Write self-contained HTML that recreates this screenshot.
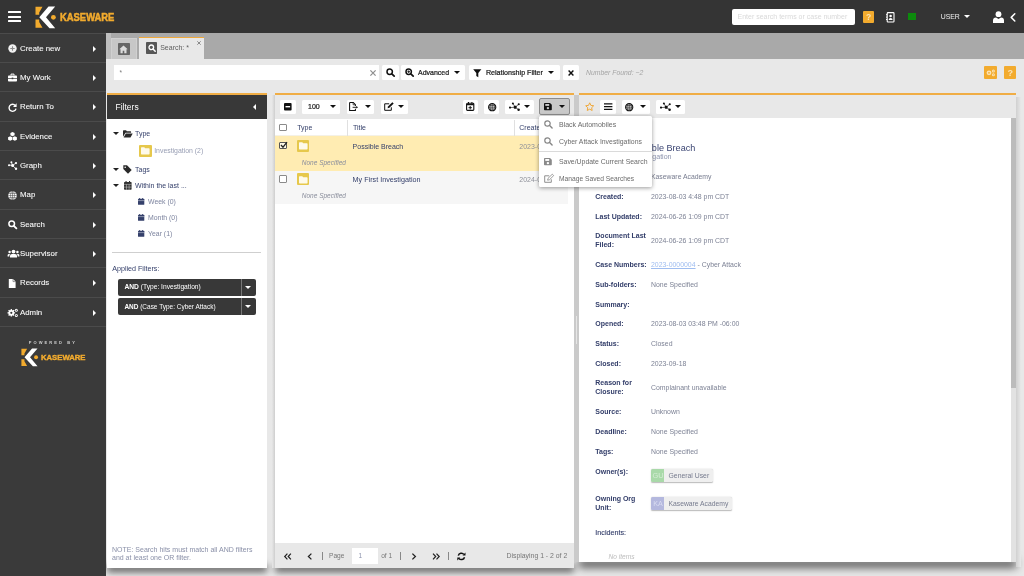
<!DOCTYPE html>
<html lang="en">
<head>
<meta charset="utf-8">
<title>Kaseware - Search</title>
<style>
*{box-sizing:border-box;margin:0;padding:0}
html,body{width:1024px;height:576px;overflow:hidden}
body{position:relative;background:#e8e8e8;font-family:"Liberation Sans",sans-serif;font-size:7px;color:#35406b;line-height:1}
.a{position:absolute}
.t{position:absolute;white-space:nowrap;line-height:10px;height:10px;margin-top:-5px}
svg{position:absolute;overflow:visible}
/* top bar */
#top{left:0;top:0;width:1024px;height:33px;background:#343434}
#side{left:0;top:33px;width:106px;height:543px;background:#3a3a3a}
.sep{position:absolute;left:0;width:106px;height:1px;background:#4b4b4b}
.mi{position:absolute;left:20px;color:#fafafa;font-size:7.85px;-webkit-text-stroke:.08px #fafafa;white-space:nowrap;line-height:10px;height:10px;margin-top:-5px}
.arr{position:absolute;left:92.6px;width:0;height:0;border-left:3.4px solid #fff;border-top:3px solid transparent;border-bottom:3px solid transparent;margin-top:-3px}
#tabs{left:106px;top:33px;width:918px;height:25.5px;background:#a9a9a9}
.btn{position:absolute;background:#fff;border-radius:1.5px;top:65px;height:15px}
.tb{position:absolute;background:#fff;border-radius:1.5px;top:99.5px;height:14.6px}
.car{position:absolute;width:0;height:0;border-top:3.3px solid #111;border-left:3px solid transparent;border-right:3px solid transparent;margin-left:-.4px;margin-top:-.35px}
.panel{position:absolute;background:#fff}
.panel::after{content:"";position:absolute;left:1px;right:1px;bottom:0;height:5px;box-shadow:0 3px 7px 1px rgba(0,0,0,.62);z-index:-1}
.or{position:absolute;height:1.8px;background:#f0ad45}
.lb{position:absolute;left:595.3px;font-weight:bold;font-size:7px;color:#323d69;white-space:nowrap;line-height:9px;margin-top:-4.5px}
.vl{position:absolute;left:651px;font-size:6.92px;padding-top:.6px;color:#7d8295;white-space:nowrap;line-height:10px;height:10px;margin-top:-5px}
#dp::after{box-shadow:0 4px 8px 1.5px rgba(0,0,0,.66)}
</style>
</head>
<body>
<div id="w" style="position:absolute;left:0;top:0;width:1024px;height:576px;will-change:transform">
<!-- TOP BAR -->
<div class="a" id="top">
  <div class="a" style="left:7.8px;top:11px;width:13.5px;height:2.3px;background:#fff;border-radius:.5px"></div>
  <div class="a" style="left:7.8px;top:15.5px;width:13.5px;height:2.3px;background:#fff;border-radius:.5px"></div>
  <div class="a" style="left:7.8px;top:20px;width:13.5px;height:2.3px;background:#fff;border-radius:.5px"></div>
  <svg style="left:35px;top:6px" width="22" height="23" viewBox="0 0 22 23">
    <polygon points="0.5,0.8 7.5,0.8 4.2,6.5 4.2,8.8 0.5,8.8" fill="#f2ab2e"/>
    <polygon points="0.5,13.5 4.2,13.5 4.2,16 7.5,21.8 0.5,21.8" fill="#f2ab2e"/>
    <polygon points="13.5,0.5 20.2,0.5 11,11.2 20.2,22.2 14.5,22.2 4.3,11.2" fill="#fff"/>
    <circle cx="18.4" cy="11.3" r="2.4" fill="#f2ab2e"/>
  </svg>
  <svg style="left:60px;top:11px" width="56" height="13"><text x="0" y="10.4" font-family="Liberation Sans, sans-serif" font-weight="bold" font-size="10.2" fill="#f2ab2e" stroke="#f2ab2e" stroke-width=".5" textLength="54.4" lengthAdjust="spacingAndGlyphs">KASEWARE</text></svg>
  <!-- search input -->
  <div class="a" style="left:732px;top:8.5px;width:123px;height:16px;background:#fff;border-radius:2px"></div>
  <div class="t" style="left:737.5px;top:16.6px;font-size:7px;color:#d9d9d9">Enter search terms or case number</div>
  <!-- orange help -->
  <div class="a" style="left:862.5px;top:10.8px;width:11.8px;height:11.8px;background:#f2ab2e;border-radius:1px"></div>
  <div class="t" style="left:866px;top:16.9px;font-size:8.5px;font-weight:bold;color:#fbe3b5">?</div>
  <!-- address book -->
  <svg style="left:885.5px;top:11.5px" width="9" height="11" viewBox="0 0 9 11">
    <rect x="1.2" y=".6" width="6.8" height="9.4" rx=".8" fill="none" stroke="#fff" stroke-width="1.1"/>
    <circle cx="4.6" cy="4" r="1.3" fill="#fff"/>
    <path d="M2.6 8 a2 1.9 0 0 1 4 0z" fill="#fff"/>
    <rect x="0" y="2.2" width="1.2" height="1" fill="#fff"/><rect x="0" y="4.6" width="1.2" height="1" fill="#fff"/><rect x="0" y="7" width="1.2" height="1" fill="#fff"/>
  </svg>
  <div class="a" style="left:907.6px;top:12.5px;width:8.2px;height:7.8px;background:#0c8a0c"></div>
  <div class="t" style="left:940.7px;top:16.6px;font-size:6.9px;color:#eee">USER</div>
  <div class="car" style="left:964px;top:15.6px;border-top-color:#fff"></div>
  <!-- user icon -->
  <svg style="left:993px;top:11px" width="11" height="12" viewBox="0 0 11 12">
    <circle cx="5.5" cy="3.2" r="2.9" fill="#fff"/>
    <path d="M0 12 v-2.6 q0-2.6 3-2.9 l2.5 1.6 2.5-1.6 q3 .3 3 2.9 v2.6z" fill="#fff"/>
  </svg>
  <svg style="left:1009.5px;top:12.5px" width="6" height="9" viewBox="0 0 6 9"><path d="M4.8 .8 L1.2 4.4 4.8 8" fill="none" stroke="#fff" stroke-width="1.5" stroke-linecap="round" stroke-linejoin="round"/></svg>
</div>

<!-- SIDEBAR -->
<div class="a" id="side"></div>
<div id="sidewrap"><div class="sep" style="top:33.0px"></div>
<svg style="left:7.9px;top:44.0px" width="10" height="9" viewBox="0 0 10 9"><circle cx="4.5" cy="4.5" r="4.2" fill="#f1f1f1"/><path d="M4.5 2.3v4.4M2.3 4.5h4.4" stroke="#8a8a8a" stroke-width="1.1"/></svg>
<div class="mi" style="top:48.5px">Create new</div><div class="arr" style="top:48.7px"></div>
<div class="sep" style="top:61.9px"></div>
<svg style="left:7.9px;top:73.3px" width="10" height="9" viewBox="0 0 10 9"><rect x="0" y="2.4" width="9" height="6.2" rx=".8" fill="#fff"/><path d="M3 2.4v-1.3h3v1.3" fill="none" stroke="#fff" stroke-width="1"/><rect x="0" y="5" width="9" height=".7" fill="#393939"/><rect x="3.7" y="4.6" width="1.6" height="1.6" fill="#393939"/></svg>
<div class="mi" style="top:77.8px">My Work</div><div class="arr" style="top:78.0px"></div>
<div class="sep" style="top:91.3px"></div>
<svg style="left:7.9px;top:102.7px" width="10" height="9" viewBox="0 0 10 9"><path d="M7.3 2.6 A3.5 3.5 0 1 0 8 5.6" fill="none" stroke="#fff" stroke-width="1.4"/><path d="M8.6 .3v3.6h-3.6z" fill="#fff"/></svg>
<div class="mi" style="top:107.2px">Return To</div><div class="arr" style="top:107.4px"></div>
<div class="sep" style="top:120.6px"></div>
<svg style="left:7.9px;top:132.0px" width="10" height="9" viewBox="0 0 10 9"><path d="M4.5 0l2.1 1v2.3l-2.1 1-2.1-1v-2.3z" fill="#fff"/><path d="M2.2 4.3l2.1 1v2.5l-2.1 1-2.1-1v-2.5z" fill="#fff"/><path d="M6.8 4.3l2.1 1v2.5l-2.1 1-2.1-1v-2.5z" fill="#fff"/></svg>
<div class="mi" style="top:136.5px">Evidence</div><div class="arr" style="top:136.7px"></div>
<div class="sep" style="top:149.9px"></div>
<svg style="left:7.9px;top:161.3px" width="10" height="9" viewBox="0 0 10 9"><path d="M1 4.2h3.2M4.5 4.4l3.3 3.3M4.5 4.4l-1-3M4.5 4.4l3.4-2.2" stroke="#fff" stroke-width=".8"/><circle cx="1" cy="4.2" r="1" fill="#fff"/><circle cx="4.6" cy="4.4" r="1.5" fill="#fff"/><circle cx="3.4" cy="1.2" r="1" fill="#fff"/><circle cx="8" cy="2.1" r="1.1" fill="#fff"/><circle cx="8" cy="7.8" r="1.2" fill="#fff"/></svg>
<div class="mi" style="top:165.8px">Graph</div><div class="arr" style="top:166.0px"></div>
<div class="sep" style="top:179.2px"></div>
<svg style="left:7.9px;top:190.6px" width="10" height="9" viewBox="0 0 10 9"><circle cx="4.5" cy="4.5" r="4.3" fill="#fff"/><path d="M4.5 .2v8.6M.2 4.5h8.6M.9 2.4h7.2M.9 6.6h7.2" stroke="#3a3a3a" stroke-width=".5" fill="none"/><ellipse cx="4.5" cy="4.5" rx="2" ry="4.3" fill="none" stroke="#3a3a3a" stroke-width=".5"/></svg>
<div class="mi" style="top:195.1px">Map</div><div class="arr" style="top:195.3px"></div>
<div class="sep" style="top:208.6px"></div>
<svg style="left:7.9px;top:220.0px" width="10" height="9" viewBox="0 0 10 9"><circle cx="3.7" cy="3.7" r="2.8" fill="none" stroke="#fff" stroke-width="1.5"/><path d="M5.8 5.8l2.6 2.6" stroke="#fff" stroke-width="1.8" stroke-linecap="round"/></svg>
<div class="mi" style="top:224.5px">Search</div><div class="arr" style="top:224.7px"></div>
<div class="sep" style="top:237.9px"></div>
<svg style="left:7.9px;top:249.3px" width="10" height="9" viewBox="0 0 10 9"><circle cx="5.5" cy="2.6" r="1.9" fill="#fff"/><path d="M2 8.6v-1.6q0-1.9 2-1.9h3q2 0 2 1.9v1.6z" fill="#fff"/><circle cx="1.6" cy="3" r="1.2" fill="#fff"/><circle cx="9.4" cy="3" r="1.2" fill="#fff"/><path d="M-.4 7.4v-1.2q0-1.3 1.4-1.3h1.2q-.9.7-.9 2.5zM11.4 7.4v-1.2q0-1.3-1.4-1.3h-1.2q.9.700 .9 2.500z" fill="#fff"/></svg>
<div class="mi" style="top:253.8px">Supervisor</div><div class="arr" style="top:254.0px"></div>
<div class="sep" style="top:267.2px"></div>
<svg style="left:7.9px;top:278.6px" width="10" height="9" viewBox="0 0 10 9"><path d="M.8 0h4.2l2.6 2.600v6.400h-6.800z" fill="#fff"/><path d="M5 0v2.600h2.600" fill="none" stroke="#393939" stroke-width=".5"/></svg>
<div class="mi" style="top:283.1px">Records</div><div class="arr" style="top:283.3px"></div>
<div class="sep" style="top:296.6px"></div>
<svg style="left:7.9px;top:308.0px" width="10" height="9" viewBox="0 0 10 9"><circle cx="3.300" cy="4.800" r="2.900" fill="#fff"/><circle cx="3.300" cy="4.800" r="1.100" fill="#393939"/><path d="M3.300 1v7.600M-.5 4.800h7.600M.6 2.100l5.400 5.400M.6 7.500l5.400-5.400" stroke="#fff" stroke-width="1.300"/><circle cx="3.300" cy="4.800" r="1.100" fill="#393939"/><circle cx="8.300" cy="2.300" r="1.500" fill="#fff"/><circle cx="8.300" cy="2.300" r=".6" fill="#393939"/><circle cx="8.300" cy="7.400" r="1.500" fill="#fff"/><circle cx="8.300" cy="7.400" r=".6" fill="#393939"/></svg>
<div class="mi" style="top:312.5px">Admin</div><div class="arr" style="top:312.7px"></div>
<div class="sep" style="top:325.9px"></div>
<svg style="left:28px;top:338px" width="50" height="8"><text x=".8" y="6" font-family="Liberation Sans, sans-serif" font-weight="bold" font-size="4" fill="#cfcfcf" textLength="46" lengthAdjust="spacing">POWERED BY</text></svg>
<svg style="left:21px;top:348px" width="18" height="19" viewBox="0 0 22 23">
    <polygon points="0.5,0.800 7.5,0.800 4.200,6.500 4.200,8.800 0.5,8.800" fill="#f2ab2e"/>
    <polygon points="0.5,13.5 4.200,13.5 4.200,16 7.5,21.800 0.5,21.800" fill="#f2ab2e"/>
    <polygon points="13.5,0.5 20.200,0.5 11,11.200 20.200,22.200 14.5,22.200 4.300,11.200" fill="#fff"/>
    <circle cx="18.400" cy="11.300" r="2.400" fill="#f2ab2e"/>
  </svg>
<svg style="left:40.5px;top:352px" width="46" height="11"><text x="0" y="8.4" font-family="Liberation Sans, sans-serif" font-weight="bold" font-size="7.7" fill="#f2ab2e" stroke="#f2ab2e" stroke-width=".4" textLength="44.5" lengthAdjust="spacingAndGlyphs">KASEWARE</text></svg>
</div>

<!-- TAB BAR -->
<div class="a" id="tabs"></div>
<div class="a" style="left:106px;top:33px;width:4.5px;height:25.5px;background:#bebebe"></div>
<div class="a" style="left:110.6px;top:38px;width:26.6px;height:20.5px;background:#c7c7c7;border:1px solid #d0d0d0;border-bottom:none"></div>
<div class="a" style="left:118px;top:43px;width:11.8px;height:12px;background:#666;border-radius:.8px"></div>
<svg style="left:119.4px;top:44.6px" width="9" height="9" viewBox="0 0 9 9"><path d="M4.5 .6 L.3 4.3h1.2v3.900h2.200v-2.500h1.600v2.500h2.200v-3.900h1.200z" fill="#dcdcdc"/></svg>
<div class="a" style="left:138.8px;top:36.8px;width:65.6px;height:21.8px;background:#e8e8e8;border-top:1.6px solid #f0a93b"></div>
<div class="a" style="left:145.6px;top:42px;width:11.9px;height:11.8px;background:#575757;border-radius:.8px"></div>
<svg style="left:147.6px;top:43.6px" width="8" height="8" viewBox="0 0 8 8"><circle cx="3.300" cy="3.300" r="2.300" fill="none" stroke="#fff" stroke-width="1.300"/><path d="M5 5l2.200 2.200" stroke="#fff" stroke-width="1.500" stroke-linecap="round"/></svg>
<div class="t" style="left:160.2px;top:47.9px;font-size:7px;color:#5e5e5e">Search: *</div>
<svg style="left:197.2px;top:40.6px" width="4" height="4" viewBox="0 0 4 4"><path d="M.3 .3l3.400 3.400M3.700 .3l-3.400 3.400" stroke="#707070" stroke-width=".8"/></svg>


<div class="a" style="left:114px;top:65.2px;width:265px;height:14.6px;background:#fff"></div>
<div class="t" style="left:119.5px;top:73px;font-size:6.5px;color:#777">*</div>
<svg style="left:370px;top:69.8px" width="6" height="6" viewBox="0 0 6 6"><path d="M.4 .4l5.200 5.200M5.600 .4l-5.200 5.200" stroke="#8e8e8e" stroke-width="1.25"/></svg>
<div class="btn" style="left:382px;width:16.8px"></div>
<svg style="left:385.6px;top:68.4px" width="9" height="9" viewBox="0 0 9 9"><circle cx="3.700" cy="3.700" r="2.700" fill="none" stroke="#111" stroke-width="1.500"/><path d="M5.800 5.800l2.400 2.400" stroke="#111" stroke-width="1.700" stroke-linecap="round"/></svg>
<div class="btn" style="left:401.2px;width:63.8px"></div>
<svg style="left:405px;top:68.4px" width="9" height="9" viewBox="0 0 9 9"><circle cx="3.700" cy="3.700" r="2.700" fill="none" stroke="#111" stroke-width="1.500"/><path d="M5.800 5.800l2.400 2.400" stroke="#111" stroke-width="1.700" stroke-linecap="round"/><path d="M3.700 2.400v2.600M2.400 3.700h2.600" stroke="#111" stroke-width=".9"/></svg>
<div class="t" style="left:418px;top:72.700px;font-size:7px;color:#1c1c1c;-webkit-text-stroke:.22px #1c1c1c">Advanced</div>
<div class="car" style="left:454.5px;top:71.600px"></div>
<div class="btn" style="left:469.4px;width:90.6px"></div>
<svg style="left:473px;top:68.600px" width="9" height="9" viewBox="0 0 9 9"><path d="M.2 .3h8.200l-3.100 3.700v4.300l-2-1.300v-3z" fill="#111"/></svg>
<div class="t" style="left:485.900px;top:72.700px;font-size:7.13px;color:#1c1c1c;-webkit-text-stroke:.22px #1c1c1c">Relationship Filter</div>
<div class="car" style="left:548.300px;top:71.600px"></div>
<div class="btn" style="left:563px;width:15.8px"></div>
<svg style="left:568px;top:69.700px" width="6" height="6" viewBox="0 0 6 6"><path d="M.6 .6l4.800 4.800M5.400 .6l-4.800 4.800" stroke="#111" stroke-width="1.45"/></svg>
<div class="t" style="left:586px;top:72.900px;font-size:6.85px;font-style:italic;color:#a4a4a4">Number Found: ~2</div>
<div class="a" style="left:984.4px;top:66px;width:12.6px;height:12.5px;background:#f2ab2e;border-radius:1px"></div>
<svg style="left:986px;top:68.500px" width="10" height="8" viewBox="0 0 10 8"><circle cx="3" cy="3.800" r="2.400" fill="#fbe3b5"/><circle cx="3" cy="3.800" r=".9" fill="#f2ab2e"/><circle cx="7.400" cy="1.900" r="1.500" fill="#fbe3b5"/><circle cx="7.400" cy="5.800" r="1.500" fill="#fbe3b5"/><circle cx="7.400" cy="1.900" r=".5" fill="#f2ab2e"/><circle cx="7.400" cy="5.800" r=".5" fill="#f2ab2e"/></svg>
<div class="a" style="left:1003.9px;top:66px;width:12.2px;height:12.5px;background:#f2ab2e;border-radius:1px"></div>
<div class="t" style="left:1007.5px;top:72.600px;font-size:9px;font-weight:bold;color:#fbe3b5">?</div>


<div class="panel" style="left:107px;top:93.5px;width:160.4px;height:474.8px"></div>
<div class="or" style="left:107px;top:93.2px;width:160.4px"></div>
<div class="a" style="left:107px;top:95px;width:160.4px;height:23.8px;background:#383838"></div>
<div class="t" style="left:115.5px;top:107px;font-size:8.5px;color:#fff;line-height:12px;height:12px;margin-top:-6px">Filters</div>
<div class="a" style="left:252.5px;top:104.2px;width:0;height:0;border-right:3.6px solid #fff;border-top:3.1px solid transparent;border-bottom:3.1px solid transparent"></div>
<!-- tree -->
<div class="car" style="left:113.6px;top:132.800px;border-top-color:#222"></div>
<svg style="left:123px;top:129.600px" width="10" height="8" viewBox="0 0 10 8"><path d="M0 .9q0-.6 .6-.6h2.400l.9 1h3.600q.6 0 .6 .6v.900h-5.600l-2.500 4z" fill="#2a2a2a"/><path d="M2.800 3.400h6.900l-2.200 4.200h-6.900z" fill="#2a2a2a"/></svg>
<div class="t" style="left:135px;top:133.800px;color:#35406b">Type</div>
<div class="a" style="left:138.8px;top:145px;width:13px;height:12px;background:#e6c84c;border-radius:1px"></div>
<svg style="left:140.75px;top:147.30px" width="8.8" height="7.6" viewBox="0 0 8.1 7"><path d="M0 .8q0-.6 .6-.6h2.400l.9 1h3.400q.6 0 .6 .6v4.500q0 .6-.6 .6h-6.700q-.6 0-.6-.6z" fill="#fefaea"/></svg>
<div class="t" style="left:154.200px;top:150.800px;font-size:6.9px;color:#979db3">Investigation (2)</div>
<div class="car" style="left:113.6px;top:168px;border-top-color:#222"></div>
<svg style="left:123px;top:164.600px" width="9" height="9" viewBox="0 0 9 9"><path d="M.3 .3h3.700l4.700 4.700-3.700 3.700-4.700-4.700z" fill="#2a2a2a"/><circle cx="2.200" cy="2.200" r=".8" fill="#fff"/></svg>
<div class="t" style="left:135px;top:169.5px;color:#35406b">Tags</div>
<div class="car" style="left:113.6px;top:184.200px;border-top-color:#222"></div>
<svg style="left:123.600px;top:180.700px" width="8" height="9" viewBox="0 0 8 9"><rect x="0" y="1" width="7.600" height="7.800" rx=".7" fill="#333"/><rect x="1.500" y="0" width="1.100" height="2" fill="#333"/><rect x="5" y="0" width="1.100" height="2" fill="#333"/><path d="M0 3.400h7.600M2.500 3.400v5.400M5.100 3.400v5.400M0 6.100h7.600" stroke="#ddd" stroke-width=".45"/></svg>
<div class="t" style="left:135px;top:185.8px;color:#35406b">Within the last ...</div>
<svg style="left:138.300px;top:198.200px" width="7" height="7" viewBox="0 0 7 7"><rect x="0" y=".7" width="6.300" height="6.100" rx=".6" fill="#35406b"/><rect x="1.200" y="0" width=".9" height="1.500" fill="#35406b"/><rect x="4.200" y="0" width=".9" height="1.500" fill="#35406b"/><path d="M0 2.600h6.300" stroke="#dfe2ee" stroke-width=".5"/></svg>
<div class="t" style="left:148px;top:201.600px;font-size:6.9px;color:#7d849f">Week (0)</div>
<svg style="left:138.300px;top:214px" width="7" height="7" viewBox="0 0 7 7"><rect x="0" y=".7" width="6.300" height="6.100" rx=".6" fill="#35406b"/><rect x="1.200" y="0" width=".9" height="1.500" fill="#35406b"/><rect x="4.200" y="0" width=".9" height="1.500" fill="#35406b"/><path d="M0 2.600h6.300" stroke="#dfe2ee" stroke-width=".5"/></svg>
<div class="t" style="left:148px;top:217.7px;font-size:6.9px;color:#7d849f">Month (0)</div>
<svg style="left:138.300px;top:230px" width="7" height="7" viewBox="0 0 7 7"><rect x="0" y=".7" width="6.300" height="6.100" rx=".6" fill="#35406b"/><rect x="1.200" y="0" width=".9" height="1.500" fill="#35406b"/><rect x="4.200" y="0" width=".9" height="1.500" fill="#35406b"/><path d="M0 2.600h6.300" stroke="#dfe2ee" stroke-width=".5"/></svg>
<div class="t" style="left:148px;top:233.7px;font-size:6.9px;color:#7d849f">Year (1)</div>
<div class="a" style="left:112.200px;top:252px;width:149px;height:1px;background:#cfcfcf"></div>
<div class="t" style="left:112.200px;top:268.500px;font-size:7.15px;color:#35406b">Applied Filters:</div>
<div class="a" style="left:117.5px;top:278.700px;width:138.600px;height:16.900px;background:#383838;border-radius:2px"></div>
<div class="a" style="left:241.200px;top:278.700px;width:.7px;height:16.900px;background:#777"></div>
<div class="t" style="left:124.400px;top:287.300px;color:#fff;font-size:6.68px"><b>AND</b> (Type: Investigation)</div>
<div class="car" style="left:245.800px;top:286.200px;border-top-color:#fff"></div>
<div class="a" style="left:117.5px;top:298.400px;width:138.600px;height:16.800px;background:#383838;border-radius:2px"></div>
<div class="a" style="left:241.200px;top:298.400px;width:.7px;height:16.800px;background:#777"></div>
<div class="t" style="left:124.400px;top:307px;color:#fff;font-size:6.48px"><b>AND</b> (Case Type: Cyber Attack)</div>
<div class="car" style="left:245.800px;top:305.800px;border-top-color:#fff"></div>
<div class="t" style="left:112px;top:549.600px;color:#8a90a8">NOTE: Search hits must match all AND filters</div>
<div class="t" style="left:112px;top:558.400px;color:#8a90a8">and at least one OR filter.</div>



<div class="a" style="left:271.8px;top:95px;width:3.4px;height:473px;background:linear-gradient(90deg,#e7e7e7,#cecece)"></div>
<div class="a" style="left:573.6px;top:95px;width:5.8px;height:467px;background:#cacaca"></div>
<div class="a" style="left:576.2px;top:315.6px;width:.9px;height:28px;background:#e6e6e6"></div>
<div class="panel" style="left:275.2px;top:93.5px;width:298.4px;height:474.8px"></div>
<div class="or" style="left:275.2px;top:93.2px;width:298.400px"></div>
<div class="a" style="left:275.2px;top:95.2px;width:298.400px;height:24.300px;background:#e8e8e8"></div>
<!-- toolbar buttons -->
<div class="tb" style="left:279.8px;width:16.2px"></div>
<svg style="left:284px;top:103px" width="8" height="8" viewBox="0 0 8 8"><rect x="0" y="0" width="7.600" height="7.400" rx="1" fill="#111"/><rect x="1.500" y="3" width="4.600" height="1.400" fill="#fff"/></svg>
<div class="tb" style="left:301.5px;width:38.3px"></div>
<div class="t" style="left:308px;top:107px;color:#1c1c1c;-webkit-text-stroke:.22px #1c1c1c">100</div>
<div class="car" style="left:330.600px;top:105.800px"></div>
<div class="tb" style="left:346.9px;width:27.5px"></div>
<svg style="left:349.400px;top:102.400px" width="10" height="9" viewBox="0 0 10 9"><path d="M.6 .5h3.700l2.100 2.100v1.300M6.400 6.700v1.700h-5.800v-7.900" fill="none" stroke="#111" stroke-width="1.05"/><path d="M4.100 .5v2.300h2.300" fill="none" stroke="#111" stroke-width=".7"/><path d="M3.600 5.300h3.800" stroke="#111" stroke-width=".9"/><path d="M7.200 4l1.900 1.300-1.900 1.300z" fill="#111"/></svg>
<div class="car" style="left:365.200px;top:105.800px"></div>
<div class="tb" style="left:381.2px;width:26.8px"></div>
<svg style="left:384px;top:102.200px" width="10" height="9" viewBox="0 0 10 9"><path d="M5.200 1.800h-4.500v6.500h6.600v-3" fill="none" stroke="#111" stroke-width="1"/><path d="M3.600 6.200l.4-1.800 4.300-4.200 1.400 1.400-4.300 4.200z" fill="#111"/></svg>
<div class="car" style="left:398px;top:105.800px"></div>
<div class="tb" style="left:463px;width:15px"></div>
<svg style="left:466.200px;top:102.200px" width="9" height="9" viewBox="0 0 9 9"><rect x=".6" y="1.300" width="7.200" height="7.100" rx=".8" fill="none" stroke="#111" stroke-width="1.1"/><path d="M.6 2.600h7.200" stroke="#111" stroke-width="1.3"/><path d="M2.500 0v1.800M5.900 0v1.800" stroke="#111" stroke-width="1"/><path d="M4.200 4v3.400M2.500 5.700h3.400" stroke="#111" stroke-width=".95"/></svg>
<div class="tb" style="left:484.4px;width:14.4px"></div>
<svg style="left:487.600px;top:102.600px" width="9" height="9" viewBox="0 0 9 9"><circle cx="4.200" cy="4.200" r="3.600" fill="none" stroke="#111" stroke-width="1.1"/><path d="M.8 4.200h6.800M4.200 .8v6.800M1.500 2.400h5.400M1.500 6h5.400M2.500 1.300q-1.100 2.900 0 5.800M5.900 1.300q1.100 2.900 0 5.800" fill="none" stroke="#111" stroke-width=".62"/></svg>
<div class="tb" style="left:505px;width:29.4px"></div>
<svg style="left:508.500px;top:102px" width="11" height="10" viewBox="0 0 11 10"><path d="M.9 5.600l5.300-.35M6.200 5.250l3.400 2.350M6.200 5.250l-2.300-3.850M6.200 5.250l3.550-3" stroke="#111" stroke-width=".6"/><circle cx="1" cy="5.600" r="1.050" fill="#111"/><rect x="4.800" y="3.850" width="2.800" height="2.800" rx=".7" fill="#111"/><circle cx="3.900" cy="1.400" r="1" fill="#111"/><circle cx="9.750" cy="2.250" r="1.050" fill="#111"/><circle cx="9.600" cy="7.700" r="1.250" fill="#111"/></svg>
<div class="car" style="left:524.600px;top:105.800px"></div>
<div class="a" style="left:539.400px;top:98px;width:30.700px;height:17.200px;background:#c9c9c9;border:1px solid #8c8c8c;border-radius:2px"></div>
<svg style="left:544px;top:103.200px" width="8" height="8" viewBox="0 0 8 8"><path d="M0 .8q0-.8 .8-.8h5.200l1.800 1.800v4.600q0 .8-.8 .8h-6.200q-.8 0-.8-.8z" fill="#111"/><rect x="1.300" y="1" width="3.900" height="1.900" fill="#c9c9c9"/><circle cx="3.900" cy="5.100" r="1.200" fill="#c9c9c9"/></svg>
<div class="car" style="left:559.400px;top:105.800px"></div>
<!-- grid header -->
<div class="a" style="left:275.2px;top:119.5px;width:298.400px;height:16.800px;background:#fff;border-bottom:1px solid #f4f1e6"></div>
<div class="a" style="left:279.200px;top:123.700px;width:7.400px;height:7.400px;border:1px solid #8a8a8a;border-radius:1px;background:#fff"></div>
<div class="t" style="left:297.200px;top:127.800px;color:#35406b">Type</div>
<div class="a" style="left:346.800px;top:119.500px;width:1px;height:16.500px;background:#e0e0e0"></div>
<div class="t" style="left:353px;top:127.800px;color:#35406b">Title</div>
<div class="a" style="left:514px;top:119.500px;width:1px;height:16.500px;background:#e0e0e0"></div>
<div class="t" style="left:519.300px;top:127.800px;color:#35406b">Created</div>
<!-- row 1 -->
<div class="a" style="left:275.2px;top:136.300px;width:298.400px;height:34.500px;background:#ffecb2"></div>
<div class="a" style="left:279.200px;top:142px;width:7.400px;height:7.400px;border:1px solid #555;border-radius:1px;background:#fdf8e6"></div>
<svg style="left:280.200px;top:141px" width="8" height="8" viewBox="0 0 8 8"><path d="M1 4l2 2.200 4-5" fill="none" stroke="#222" stroke-width="1.300"/></svg>
<div class="a" style="left:297.200px;top:140px;width:11.800px;height:12px;background:#e6c84c;border-radius:1px"></div>
<svg style="left:298.75px;top:142.30px" width="8.8" height="7.6" viewBox="0 0 8.1 7"><path d="M0 .8q0-.6 .6-.6h2.400l.9 1h3.400q.6 0 .6 .6v4.500q0 .6-.6 .6h-6.700q-.6 0-.6-.6z" fill="#fefaea"/></svg>
<div class="t" style="left:352.600px;top:146.7px;color:#35406b">Possible Breach</div>
<div class="t" style="left:519.300px;top:146.7px;color:#8e9099">2023-08-03</div>
<div class="t" style="left:301.800px;top:162.600px;color:#8a8e9c;font-style:italic;font-size:6.5px">None Specified</div>
<!-- row 2 -->
<div class="a" style="left:275.2px;top:170.800px;width:292.800px;height:33px;background:#f6f6f6"></div>
<div class="a" style="left:279.200px;top:175.400px;width:7.400px;height:7.400px;border:1px solid #8a8a8a;border-radius:1px;background:#fff"></div>
<div class="a" style="left:297.200px;top:173.300px;width:11.800px;height:12px;background:#e6c84c;border-radius:1px"></div>
<svg style="left:298.75px;top:175.60px" width="8.8" height="7.6" viewBox="0 0 8.1 7"><path d="M0 .8q0-.6 .6-.6h2.400l.9 1h3.400q.6 0 .6 .6v4.500q0 .6-.6 .6h-6.700q-.6 0-.6-.6z" fill="#fefaea"/></svg>
<div class="t" style="left:352.600px;top:179.9px;font-size:7.2px;color:#35406b">My First Investigation</div>
<div class="t" style="left:519.300px;top:179.9px;color:#8e9099">2024-06-26</div>
<div class="t" style="left:301.800px;top:195.800px;color:#8a8e9c;font-style:italic;font-size:6.5px">None Specified</div>
<!-- paging -->
<div class="a" style="left:275.2px;top:542.800px;width:298.400px;height:25.500px;background:#e8e8e8"></div>
<svg style="left:284.400px;top:552.500px" width="8" height="7" viewBox="0 0 8 7"><path d="M3.400 .6l-2.700 2.900 2.700 2.900M6.900 .6l-2.700 2.900 2.700 2.900" fill="none" stroke="#222" stroke-width="1.200"/></svg>
<svg style="left:306.700px;top:552.500px" width="6" height="7" viewBox="0 0 6 7"><path d="M4.400 .6l-3 2.900 3 2.900" fill="none" stroke="#222" stroke-width="1.300"/></svg>
<div class="a" style="left:321.700px;top:552px;width:.8px;height:8px;background:#888"></div>
<div class="t" style="left:329px;top:556.200px;font-size:6.600px;color:#777">Page</div>
<div class="a" style="left:352px;top:548.400px;width:25.800px;height:15.200px;background:#fff"></div>
<div class="t" style="left:358.500px;top:556.200px;font-size:6.600px;color:#8d94ae">1</div>
<div class="t" style="left:381.200px;top:556.200px;font-size:6.600px;color:#777">of 1</div>
<div class="a" style="left:400.200px;top:552px;width:.8px;height:8px;background:#888"></div>
<svg style="left:410.600px;top:552.500px" width="6" height="7" viewBox="0 0 6 7"><path d="M1.400 .6l3 2.900-3 2.900" fill="none" stroke="#222" stroke-width="1.300"/></svg>
<svg style="left:431.800px;top:552.500px" width="8" height="7" viewBox="0 0 8 7"><path d="M1 .6l2.700 2.900-2.700 2.900M4.500 .6l2.700 2.900-2.700 2.900" fill="none" stroke="#222" stroke-width="1.200"/></svg>
<div class="a" style="left:448px;top:552px;width:.8px;height:8px;background:#888"></div>
<svg style="left:456.600px;top:551.800px" width="9" height="9" viewBox="0 0 9 9"><path d="M1.300 3.600a3.200 3.200 0 0 1 5.600-1.200M7.500 5.200a3.200 3.200 0 0 1-5.600 1.200" fill="none" stroke="#111" stroke-width="1.500"/><path d="M8.500 .4v3h-3zM.3 8.400v-3h3z" fill="#111"/></svg>
<div class="t" style="left:506.500px;top:556.200px;font-size:6.88px;color:#777">Displaying 1 - 2 of 2</div>


<div class="a" style="left:1016px;top:97px;width:5px;height:470px;background:linear-gradient(90deg,#d0d0d0,#e8e8e8)"></div>
<div class="panel" id="dp" style="left:579.4px;top:93.5px;width:436.6px;height:468.5px"></div>
<div class="or" style="left:579.4px;top:93.2px;width:436.600px"></div>
<div class="a" style="left:579.4px;top:95.2px;width:436.600px;height:22.600px;background:#e8e8e8"></div>
<svg style="left:584.600px;top:102.200px" width="10" height="10" viewBox="0 0 10 10"><path d="M4.700 .8l1.200 2.600 2.800 .35-2.050 1.950 .5 2.800-2.450-1.350-2.450 1.350 .5-2.800-2.050-1.950 2.800-.35z" fill="none" stroke="#f0a93b" stroke-width="1" stroke-linejoin="round"/></svg>
<div class="tb" style="left:600px;width:16px;top:99.800px;height:14.300px"></div>
<svg style="left:603.800px;top:103.300px" width="9" height="8" viewBox="0 0 9 8"><path d="M0 .8h8.400M0 3.600h8.400M0 6.400h8.400" stroke="#111" stroke-width="1.300"/></svg>
<div class="tb" style="left:622px;width:28px;top:99.800px;height:14.300px"></div>
<svg style="left:625px;top:102.600px" width="9" height="9" viewBox="0 0 9 9"><circle cx="4.200" cy="4.200" r="3.600" fill="none" stroke="#111" stroke-width="1.1"/><path d="M.8 4.200h6.800M4.200 .8v6.800M1.500 2.400h5.400M1.500 6h5.400M2.500 1.300q-1.100 2.900 0 5.800M5.900 1.300q1.100 2.900 0 5.800" fill="none" stroke="#111" stroke-width=".62"/></svg>
<div class="car" style="left:640.600px;top:105.800px"></div>
<div class="tb" style="left:656px;width:29px;top:99.800px;height:14.300px"></div>
<svg style="left:659.500px;top:102px" width="11" height="10" viewBox="0 0 11 10"><path d="M.9 5.600l5.300-.35M6.200 5.250l3.400 2.350M6.200 5.250l-2.300-3.850M6.200 5.250l3.550-3" stroke="#111" stroke-width=".6"/><circle cx="1" cy="5.600" r="1.050" fill="#111"/><rect x="4.800" y="3.850" width="2.800" height="2.800" rx=".7" fill="#111"/><circle cx="3.900" cy="1.400" r="1" fill="#111"/><circle cx="9.750" cy="2.250" r="1.050" fill="#111"/><circle cx="9.600" cy="7.700" r="1.250" fill="#111"/></svg>
<div class="car" style="left:675.400px;top:105.800px"></div>
<div class="a" style="left:1010.500px;top:117.800px;width:5.500px;height:444.200px;background:#e2e2e2"></div>
<div class="a" style="left:1010.500px;top:117.800px;width:5.500px;height:270.4px;background:#bcbcbc"></div>
<div class="a" style="left:595.300px;top:138px;width:44px;height:44px;background:#e6c84c;border-radius:3px"></div>
<div class="t" style="left:auto;right:328.7px;top:147.7px;font-size:9.1px;color:#3b4573;line-height:14px;height:14px;margin-top:-7px">Possible Breach</div>
<div class="t" style="left:auto;right:352.5px;top:157.2px;font-size:7.05px;color:#8d94ae">Investigation</div>
<div class="t" style="left:651px;top:176.8px;font-size:6.85px;color:#767b8e">Kaseware Academy</div>
<div class="lb" style="top:196.0px">Created:</div>
<div class="vl" style="top:196.0px">2023-08-03 4:48 pm CDT</div>
<div class="lb" style="top:216.0px">Last Updated:</div>
<div class="vl" style="top:216.0px">2024-06-26 1:09 pm CDT</div>
<div class="lb" style="top:235.8px">Document Last<br>Filed:</div>
<div class="vl" style="top:240.3px">2024-06-26 1:09 pm CDT</div>
<div class="lb" style="top:264.6px">Case Numbers:</div>
<div class="lb" style="top:284.2px">Sub-folders:</div>
<div class="vl" style="top:284.2px">None Specified</div>
<div class="lb" style="top:304.0px">Summary:</div>
<div class="lb" style="top:323.7px">Opened:</div>
<div class="vl" style="top:323.7px">2023-08-03 03:48 PM -06:00</div>
<div class="lb" style="top:343.3px">Status:</div>
<div class="vl" style="top:343.3px">Closed</div>
<div class="lb" style="top:363.0px">Closed:</div>
<div class="vl" style="top:363.0px">2023-09-18</div>
<div class="lb" style="top:382.9px">Reason for<br>Closure:</div>
<div class="vl" style="top:387.4px">Complainant unavailable</div>
<div class="lb" style="top:411.7px">Source:</div>
<div class="vl" style="top:411.7px">Unknown</div>
<div class="lb" style="top:431.4px">Deadline:</div>
<div class="vl" style="top:431.4px">None Specified</div>
<div class="lb" style="top:451.1px">Tags:</div>
<div class="vl" style="top:451.1px">None Specified</div>
<div class="lb" style="top:471.0px">Owner(s):</div>
<div class="lb" style="top:498.8px">Owning Org<br>Unit:</div>
<div class="vl" style="top:264.600px"><span style="color:#9fbdf0;text-decoration:underline">2023-0000004</span> - Cyber Attack</div>
<div class="a" style="left:651px;top:469px;width:62px;height:13px;background:#efefef;border-radius:1.500px;box-shadow:0 .9px 1.2px rgba(0,0,0,.28)"></div>
<div class="a" style="left:651px;top:469px;width:13px;height:13px;background:#a9d9a9;border-radius:1.500px 0 0 1.500px"></div>
<div class="t" style="left:652.6px;top:475.9px;font-size:7.4px;color:#d4ecd4">GU</div>
<div class="t" style="left:668.500px;top:476.1px;font-size:6.85px;color:#767b8e">General User</div>
<div class="a" style="left:651px;top:497px;width:81px;height:13.2px;background:#efefef;border-radius:1.500px;box-shadow:0 .9px 1.2px rgba(0,0,0,.28)"></div>
<div class="a" style="left:651px;top:497px;width:13px;height:13.2px;background:#b4b8de;border-radius:1.500px 0 0 1.500px"></div>
<div class="t" style="left:653.2px;top:504px;font-size:7.2px;color:#d9dcf1">KA</div>
<div class="t" style="left:668.500px;top:504.2px;font-size:6.78px;color:#767b8e">Kaseware Academy</div>
<div class="t" style="left:595.300px;top:532.800px;font-size:7.2px;color:#323d69;-webkit-text-stroke:.12px #323d69">Incidents:</div>
<div class="t" style="left:608.500px;top:556.5px;font-style:italic;color:#bcbcbc;font-size:6.600px">No items</div>

<div class="a" style="left:539.400px;top:115.600px;width:112.600px;height:71.800px;background:#fff;border-radius:1.500px;box-shadow:0 1px 4px rgba(0,0,0,.4)"></div>
<svg style="left:544px;top:120.300px" width="9" height="9" viewBox="0 0 9 9"><circle cx="3.500" cy="3.500" r="2.700" fill="none" stroke="#858585" stroke-width="1.200"/><path d="M5.600 5.600l2.500 2.500" stroke="#858585" stroke-width="1.400" stroke-linecap="round"/></svg>
<div class="t" style="left:559px;top:124.500px;color:#6b6b6b">Black Automobiles</div>
<svg style="left:544px;top:137.100px" width="9" height="9" viewBox="0 0 9 9"><circle cx="3.500" cy="3.500" r="2.700" fill="none" stroke="#858585" stroke-width="1.200"/><path d="M5.600 5.600l2.500 2.500" stroke="#858585" stroke-width="1.400" stroke-linecap="round"/></svg>
<div class="t" style="left:559px;top:141.8px;font-size:6.88px;color:#6b6b6b">Cyber Attack Investigations</div>
<div class="a" style="left:539.400px;top:150.800px;width:112.600px;height:.8px;background:#dadada"></div>
<svg style="left:544.200px;top:157.800px" width="8" height="8" viewBox="0 0 8 8"><path d="M0 .8q0-.8 .8-.8h5.200l1.800 1.800v4.600q0 .8-.8 .8h-6.200q-.8 0-.8-.8z" fill="#8a8a8a"/><rect x="1.300" y="1" width="3.900" height="1.900" fill="#fff"/><circle cx="3.900" cy="5.100" r="1.200" fill="#fff"/></svg>
<div class="t" style="left:559px;top:162.3px;font-size:6.9px;color:#6b6b6b">Save/Update Current Search</div>
<svg style="left:543.600px;top:173.800px" width="10" height="9" viewBox="0 0 10 9"><path d="M5.200 1.800h-4.500v6.500h6.600v-3" fill="none" stroke="#858585" stroke-width=".9"/><path d="M3.600 6.200l.4-1.800 4.300-4.200 1.400 1.400-4.300 4.200z" fill="none" stroke="#858585" stroke-width=".8"/></svg>
<div class="t" style="left:559px;top:178.600px;font-size:6.7px;color:#6b6b6b">Manage Saved Searches</div>
</div>
</body>
</html>
